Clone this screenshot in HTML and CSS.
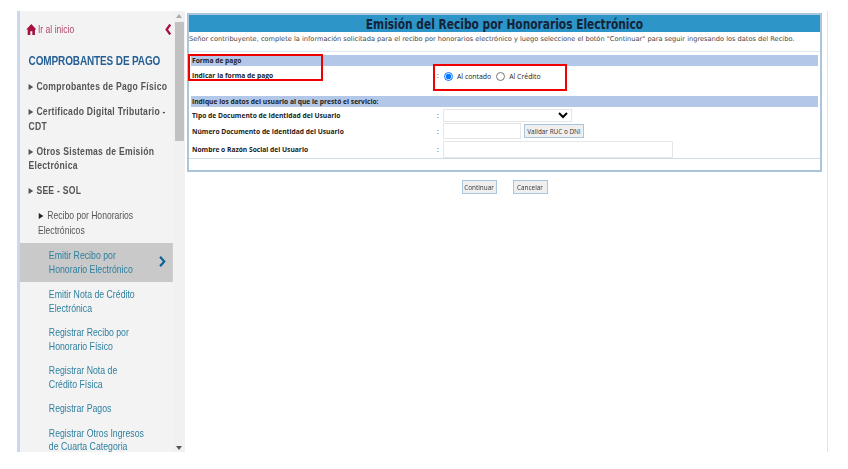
FILE: index.html
```html
<!DOCTYPE html>
<html lang="es">
<head>
  <meta charset="UTF-8">
  <title>Emisión del Recibo por Honorarios Electrónico</title>
  <link rel="stylesheet" href="styles.css">
</head>
<body>
  <div class="shell">
    <aside class="sidebar">
      <div class="menu">
        <nav class="menu-inner">
          <div class="home">
            <a class="home-link">
              <svg class="home-icon" viewBox="0 0 10 10" preserveAspectRatio="none"><path d="M5 0 10 5H8.6V10H6V6.6H4V10H1.4V5H0Z"/></svg>
              Ir al inicio
            </a>
            <svg class="collapse" viewBox="0 0 6 10" preserveAspectRatio="none"><path d="M5 .5 1.5 5 5 9.5" /></svg>
          </div>
          <h2 class="menu-title">COMPROBANTES DE PAGO</h2>
          <div class="item"><span class="arrow"></span>Comprobantes de Pago Físico</div>
          <div class="item"><span class="arrow"></span>Certificado Digital Tributario -<br>CDT</div>
          <div class="item"><span class="arrow"></span>Otros Sistemas de Emisión<br>Electrónica</div>
          <div class="item"><span class="arrow"></span>SEE - SOL</div>
          <div class="subitem"><span class="arrow dark"></span>Recibo por Honorarios<br>Electrónicos</div>
          <a class="link active">Emitir Recibo por<br>Honorario Electrónico
            <svg class="chevron" viewBox="0 0 7 11" preserveAspectRatio="none"><path d="M1.2 .8 5.4 5.5 1.2 10.2"/></svg>
          </a>
          <a class="link">Emitir Nota de Crédito<br>Electrónica</a>
          <a class="link">Registrar Recibo por<br>Honorario Físico</a>
          <a class="link">Registrar Nota de<br>Crédito Física</a>
          <a class="link">Registrar Pagos</a>
          <a class="link">Registrar Otros Ingresos<br>de Cuarta Categoria</a>
        </nav>
      </div>
      <div class="scrollbar">
        <span class="scroll-up"></span>
        <span class="scroll-thumb"></span>
        <span class="scroll-down"></span>
      </div>
    </aside>

    <main class="content">
      <section class="panel">
        <h1 class="panel-title"><span>Emisión del Recibo por Honorarios Electrónico</span></h1>
        <p class="intro">Señor contribuyente, complete la información solicitada para el recibo por honorarios electrónico y luego seleccione el botón "Continuar" para seguir ingresando los datos del Recibo.</p>
        <div class="form-box">
          <div class="bar">Forma de pago</div>
          <div class="row row-pay">
            <label>Indicar la forma de pago</label>
            <span class="colon">:</span>
            <div class="radios">
              <input type="radio" name="pago" checked> <span>Al contado</span>
              <input type="radio" name="pago"> <span>Al Crédito</span>
            </div>
          </div>
          <div class="bar bar-user">Indique los datos del usuario al que le prestó el servicio:</div>
          <div class="row row-type">
            <label>Tipo de Documento de Identidad del Usuario</label>
            <span class="colon">:</span>
            <select class="field-select"><option></option></select>
          </div>
          <div class="row row-num">
            <label>Número Documento de Identidad del Usuario</label>
            <span class="colon">:</span>
            <div class="num-wrap">
              <input class="field-num" type="text">
              <button class="btn btn-small" type="button">Validar RUC o DNI</button>
            </div>
          </div>
          <div class="row row-name">
            <label>Nombre o Razón Social del Usuario</label>
            <span class="colon">:</span>
            <input class="field-name" type="text">
          </div>
        </div>
        <span class="mark mark-left"></span>
        <span class="mark mark-right"></span>
      </section>
      <div class="actions">
        <button class="btn" type="button">Continuar</button>
        <button class="btn" type="button">Cancelar</button>
      </div>
    </main>
  </div>
</body>
</html>
```

FILE: styles.css
```css
:root {
  --bar: #b3c8e8;
  --border: #a9c6dd;
  --link: #2f7f9f;
  --red: #f00000;
}

* {
  box-sizing: border-box;
  margin: 0;
  padding: 0;
}

html, body {
  height: 100%;
  overflow: hidden;
  background: #fff;
}

body {
  font-family: 'Open Sans', sans-serif;
  color: #333;
}

.shell {
  display: flex;
  height: 441px;
  margin: 11px 0 0 17px;
  width: 811px;
  border-right: 1px solid #dfe4ec;
  filter: blur(0.4px);
}

/* menu lateral: la fuente original es angosta */
.sidebar {
  flex: 0 0 168px;
  display: flex;
  background: #f3f3f3;
  border-left: 3px solid #c9d8ee;
  overflow: hidden;
}

.menu {
  flex: 0 0 153px;
  overflow: hidden;
}

.menu-inner {
  width: 196px;
  font-family: 'Liberation Sans', sans-serif;
  transform: scaleX(0.78);
  transform-origin: left top;
}

.home {
  display: flex;
  justify-content: space-between;
  align-items: center;
  height: 36px;
  padding: 0 2px 0 8px;
}

.home-link {
  font-size: 11px;
  color: #b04a6c;
  display: flex;
  align-items: center;
  gap: 2px;
}

.home-icon {
  width: 13px;
  height: 11px;
  fill: #a5123f;
}

.collapse {
  width: 8px;
  height: 11px;
  fill: none;
  stroke: #a5123f;
  stroke-width: 2.2;
}

.menu-title {
  font-size: 12.8px;
  font-weight: 700;
  letter-spacing: -0.15px;
  color: #255f95;
  padding: 6px 0 0 11px;
  line-height: 16px;
  margin-bottom: 10px;
  white-space: nowrap;
}

.item {
  font-size: 11px;
  font-weight: 700;
  letter-spacing: 0.35px;
  color: #555;
  line-height: 14.5px;
  padding: 0 0 0 11px;
  margin-bottom: 10.5px;
  white-space: nowrap;
}

.subitem {
  font-size: 11px;
  color: #555;
  line-height: 14.5px;
  padding: 0 0 0 23px;
  margin-bottom: 6px;
}

.arrow {
  display: inline-block;
  border-left: 6px solid #555;
  border-top: 3.5px solid transparent;
  border-bottom: 3.5px solid transparent;
  margin-right: 4px;
}

.arrow.dark {
  border-left-color: #222;
  margin-left: 1px;
  margin-right: 5px;
}

.link {
  display: block;
  position: relative;
  font-size: 11.2px;
  line-height: 13.5px;
  color: var(--link);
  padding: 0 0 11px 37px;
}

.link.active {
  background: #c9c9c9;
  padding: 6px 0 6px 37px;
  margin-bottom: 6px;
}

.chevron {
  position: absolute;
  right: 9px;
  top: 13px;
  width: 9px;
  height: 11px;
  fill: none;
  stroke: #0d6396;
  stroke-width: 2.2;
}

.scrollbar {
  flex: 0 0 12px;
  position: relative;
  display: flex;
  flex-direction: column;
  align-items: center;
  background: #f1f1f1;
}

.scroll-up {
  margin-top: 3px;
  border: 3px solid transparent;
  border-top: 0;
  border-bottom: 4px solid #aaa;
}

.scroll-thumb {
  width: 9px;
  height: 119px;
  margin-top: 4px;
  background: #c1c1c1;
}

.scroll-down {
  margin-top: auto;
  margin-bottom: 2px;
  border: 3px solid transparent;
  border-bottom: 0;
  border-top: 4px solid #555;
}

/* contenido */
.content {
  flex: 0 0 635px;
  margin: 2px 0 0 2px;
}

.panel {
  position: relative;
  height: 159px;
  border: 2px solid var(--border);
  background: #fff;
}

.panel-title {
  height: 17px;
  background: #2e95c9;
  color: #12243a;
  font-family: 'DejaVu Sans', sans-serif;
  font-size: 14px;
  line-height: 18px;
  font-weight: 700;
  text-align: center;
}

.panel-title span {
  display: inline-block;
  white-space: nowrap;
  transform: scaleX(0.76);
}

.intro {
  font-family: 'DejaVu Sans', sans-serif;
  font-size: 6.63px;
  line-height: 12px;
  padding: 1px 0 0 0;
  height: 19px;
  color: #444;
  white-space: nowrap;
}

.form-box {
  height: 108px;
  padding: 3px 2px 0 2px;
  border-top: 1px solid #dfe8f0;
  border-bottom: 1px solid #cfdde9;
}

.bar {
  background: var(--bar);
  font-size: 6.7px;
  font-weight: 700;
  line-height: 11px;
  height: 11px;
  padding-left: 1px;
  color: #222;
}

.bar-user {
  margin-top: 11px;
}

.row {
  display: grid;
  grid-template-columns: 245px 6px 1fr;
  align-items: center;
  font-size: 6.7px;
  font-weight: 700;
  color: #222;
  padding-left: 1px;
}

.row-pay {
  height: 19px;
}

.row-pay label {
  margin-top: -1px;
}

.colon {
  font-weight: 400;
}

.radios {
  display: flex;
  align-items: center;
  gap: 3px;
  font-weight: 400;
  font-size: 6.9px;
  padding-top: 1px;
}

.radios input {
  width: 9px;
  height: 9px;
  margin: 0 1px 0 1px;
}

.radios span {
  margin-right: 1px;
}

.field-select {
  width: 129px;
  height: 13px;
  border: 1px solid #e6e6e6;
  background: #fff;
}

.num-wrap {
  display: flex;
  align-items: center;
  gap: 3px;
}

.field-num {
  width: 78px;
  height: 16px;
  border: 1px solid #e6e6e6;
}

.field-name {
  width: 230px;
  height: 17px;
  border: 1px solid #e6e6e6;
}

.row-type {
  height: 15px;
  margin-top: 1px;
}

.row-num {
  height: 16px;
}

.row-name {
  height: 18px;
  margin-top: 1px;
}

.btn {
  font-family: 'Open Sans', sans-serif;
  font-size: 6.4px;
  width: 35px;
  height: 14px;
  padding: 0;
  color: #333;
  background: #efefef;
  border: 1px solid #a9c6dd;
}

.btn-small {
  width: 60px;
  white-space: nowrap;
}

.actions {
  display: flex;
  justify-content: center;
  gap: 16px;
  margin-top: 8px;
}

/* recuadros rojos */
.mark {
  position: absolute;
  border: 2px solid var(--red);
}

.mark-left {
  left: -1px;
  top: 39px;
  width: 135px;
  height: 27px;
}

.mark-right {
  left: 244px;
  top: 49px;
  width: 134px;
  height: 27px;
}
```
